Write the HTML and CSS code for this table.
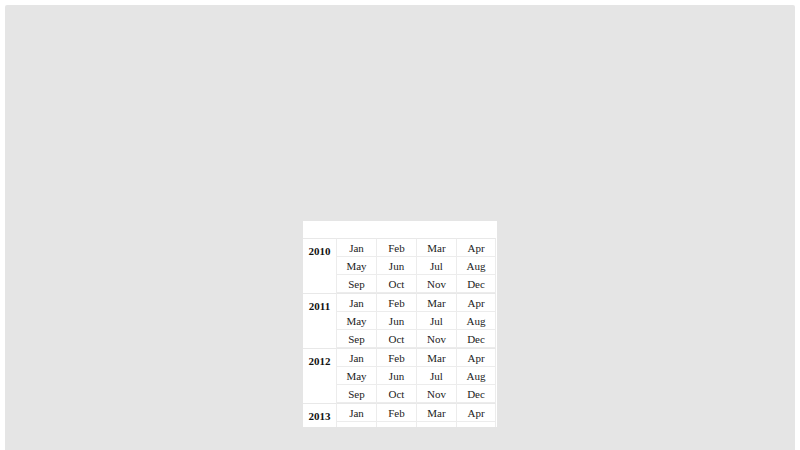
FILE: index.html
```html
<!DOCTYPE html>
<html>
<head>
<meta charset="utf-8">
<link rel="stylesheet" href="styles.css">
</head>
<body>
<div class="frame">
  <div class="picker">
    <div class="picker-head"></div>
    <div class="picker-body">
      <table class="months">
        <colgroup><col class="c-year"><col class="c-m"><col class="c-m"><col class="c-m"><col class="c-m"></colgroup>
        <tbody>
          <tr class="first"><th rowspan="3">2010</th><td>Jan</td><td>Feb</td><td>Mar</td><td>Apr</td></tr>
          <tr><td>May</td><td>Jun</td><td>Jul</td><td>Aug</td></tr>
          <tr><td>Sep</td><td>Oct</td><td>Nov</td><td>Dec</td></tr>
          <tr class="first"><th rowspan="3">2011</th><td>Jan</td><td>Feb</td><td>Mar</td><td>Apr</td></tr>
          <tr><td>May</td><td>Jun</td><td>Jul</td><td>Aug</td></tr>
          <tr><td>Sep</td><td>Oct</td><td>Nov</td><td>Dec</td></tr>
          <tr class="first"><th rowspan="3">2012</th><td>Jan</td><td>Feb</td><td>Mar</td><td>Apr</td></tr>
          <tr><td>May</td><td>Jun</td><td>Jul</td><td>Aug</td></tr>
          <tr><td>Sep</td><td>Oct</td><td>Nov</td><td>Dec</td></tr>
          <tr class="first"><th rowspan="3">2013</th><td>Jan</td><td>Feb</td><td>Mar</td><td>Apr</td></tr>
          <tr><td>May</td><td>Jun</td><td>Jul</td><td>Aug</td></tr>
          <tr><td>Sep</td><td>Oct</td><td>Nov</td><td>Dec</td></tr>
        </tbody>
      </table>
    </div>
  </div>
</div>
</body>
</html>
```
FILE: styles.css
```css
html, body {
  margin: 0;
  padding: 0;
  background: #ffffff;
  overflow: hidden;
}
.frame {
  margin: 5px;
  height: 460px;
  background: #e5e5e5;
  border-radius: 2px;
  padding-top: 216px;
  box-sizing: border-box;
}
.picker {
  width: 194px;
  height: 206px;
  margin: 0 auto;
  background: #ffffff;
  overflow: hidden;
  font-family: "Liberation Serif", "Times New Roman", serif;
  font-size: 11px;
  color: #222;
}
.picker-head {
  height: 17px;
}
.months {
  border-collapse: separate;
  border-spacing: 0;
  table-layout: fixed;
  width: 193px;
}
.c-year { width: 33px; }
.c-m { width: 40px; }
.months th {
  vertical-align: top;
  padding: 6px 0 0 0;
  font-weight: bold;
  text-align: center;
  color: #111;
}
.months td {
  height: 17px;
  padding: 0;
  text-align: center;
  border-left: 1px solid #ececec;
  border-bottom: 1px solid #ececec;
}
.months tr.first th,
.months tr.first td {
  border-top: 1px solid #e8e8e8;
}
.months td:last-child {
  border-right: 1px solid #ececec;
}
```
